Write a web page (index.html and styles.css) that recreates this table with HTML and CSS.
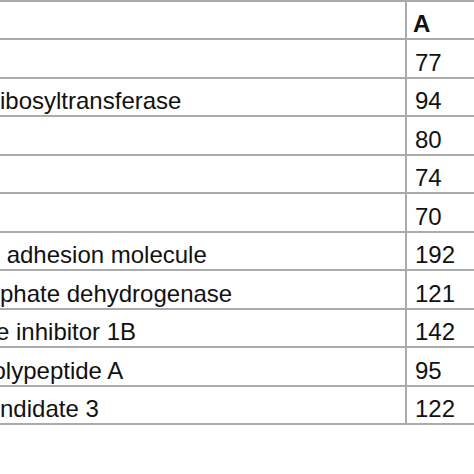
FILE: index.html
```html
<!DOCTYPE html>
<html>
<head>
<meta charset="utf-8">
<link rel="stylesheet" href="styles.css">
</head>
<body>
<div class="table">
  <div class="cell name head"></div>
  <div class="cell val head"><b>A</b></div>

  <div class="cell name"></div>
  <div class="cell val">77</div>

  <div class="cell name"><span>ibosyltransferase</span></div>
  <div class="cell val">94</div>

  <div class="cell name"></div>
  <div class="cell val">80</div>

  <div class="cell name"></div>
  <div class="cell val">74</div>

  <div class="cell name"></div>
  <div class="cell val">70</div>

  <div class="cell name"><span>&nbsp;adhesion molecule</span></div>
  <div class="cell val">192</div>

  <div class="cell name"><span>phate dehydrogenase</span></div>
  <div class="cell val">121</div>

  <div class="cell name"><span class="cut-e">e inhibitor 1B</span></div>
  <div class="cell val">142</div>

  <div class="cell name"><span class="cut-o">olypeptide A</span></div>
  <div class="cell val">95</div>

  <div class="cell name"><span>ndidate 3</span></div>
  <div class="cell val">122</div>
</div>
</body>
</html>
```
FILE: styles.css
```css
html, body {
  margin: 0;
  padding: 0;
  background: #ffffff;
}

body {
  width: 474px;
  height: 474px;
  overflow: hidden;
  font-family: "Liberation Sans", Arial, Helvetica, sans-serif;
  font-size: 24px;
  color: #111111;
}

.table {
  display: grid;
  grid-template-columns: 407px 1fr;
  border-top: 2px solid #ababab;
  width: 474px;
}

.cell {
  box-sizing: border-box;
  height: 38.5px;
  border-bottom: 2px solid #ababab;
  display: flex;
  align-items: flex-end;
  padding-bottom: 2px;
  line-height: 24px;
  white-space: nowrap;
}

.cell.head {
  height: 38px;
}

.name {
  border-right: 2px solid #ababab;
  overflow: hidden;
  padding-left: 0;
}

.val {
  padding-left: 8px;
}

.val b {
  font-weight: 700;
  margin-left: -2px;
}

.cut-e {
  margin-left: -4px;
}

.cut-o {
  margin-left: -7.5px;
}
```
